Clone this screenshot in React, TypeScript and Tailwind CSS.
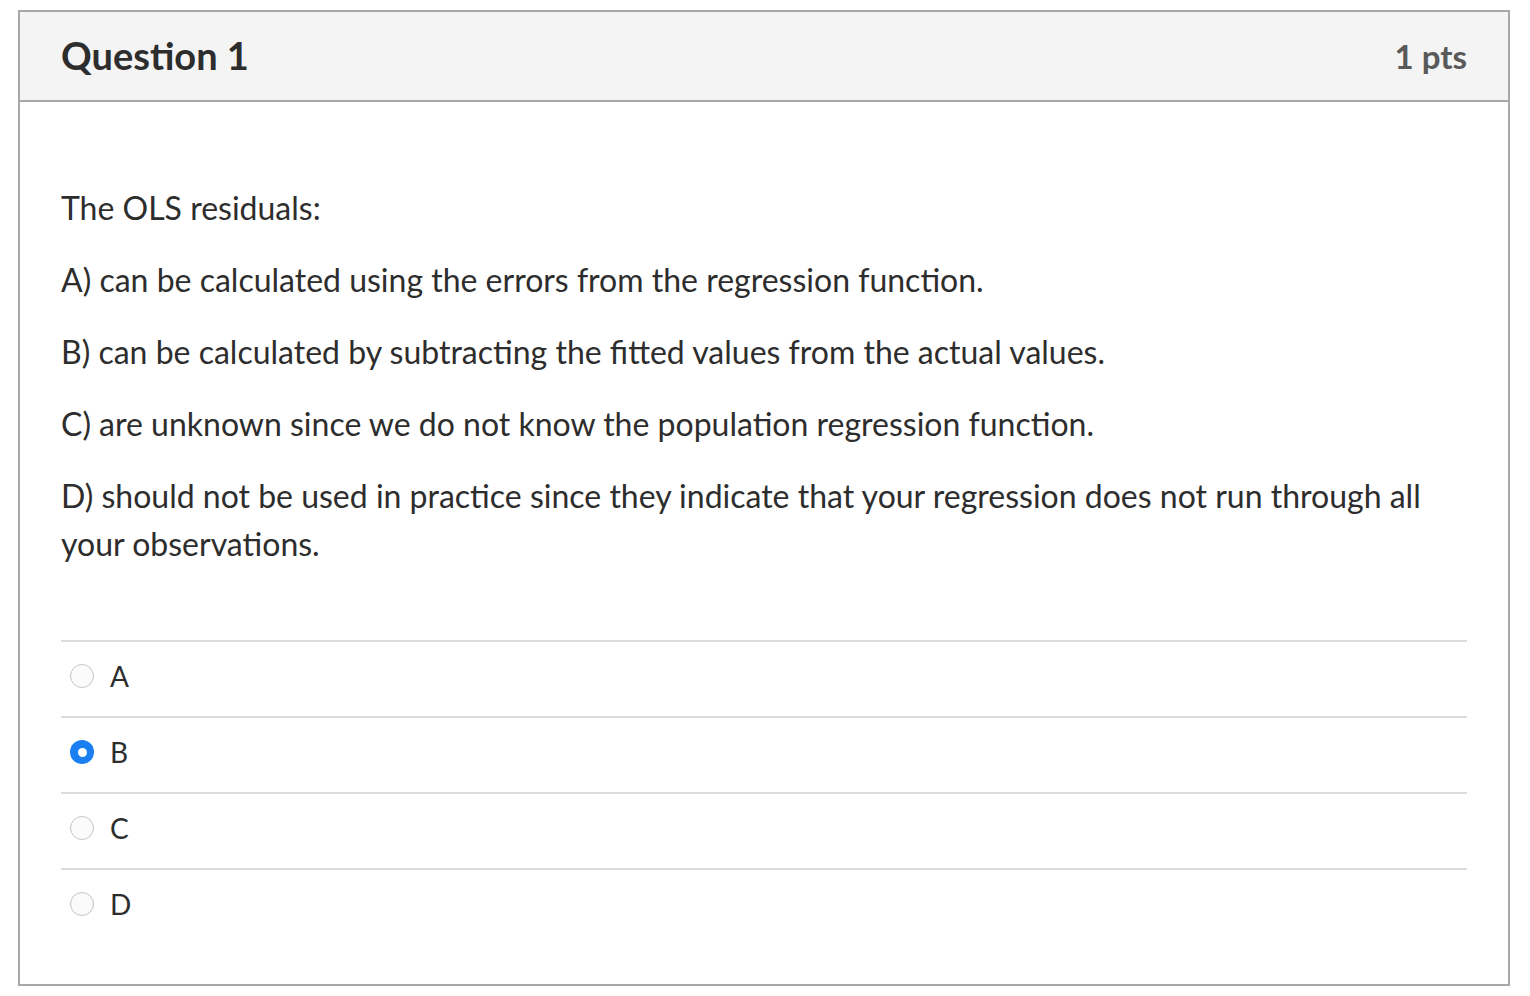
import React from "react";

const answers = ["A", "B", "C", "D"];

function Radio({ checked }: { checked: boolean }) {
  if (checked) {
    return (
      <span className="flex h-[24px] w-[24px] items-center justify-center rounded-full bg-[#1a7ff0]">
        <span className="h-[9px] w-[9px] rounded-full bg-white" />
      </span>
    );
  }
  return (
    <span className="block h-[24px] w-[24px] rounded-full border border-[#c4c4c4] bg-[#fbfbfb]" />
  );
}

export default function App() {
  return (
    <div
      className="min-h-[996px] bg-white pl-[18px] pt-[10px] text-[#2d2d2d]"
      style={{ fontFamily: "Lato, 'Open Sans', sans-serif" }}
    >
      <div className="h-[976px] w-[1492px] border-2 border-[#a8a8a8]">
        <div className="flex h-[90px] items-center justify-between border-b-2 border-[#a8a8a8] bg-[#f4f4f4] px-[41px] pb-[2px]">
          <h2 className="text-[38px] font-bold leading-none text-[#2d2d2d]">Question 1</h2>
          <span className="pt-[2px] text-[33px] font-bold leading-none text-[#595959]">1 pts</span>
        </div>
        <div className="px-[41px] pt-[82px]">
          <div className="flex flex-col gap-[24px] text-[32px] leading-[48px]">
            <p>The OLS residuals:</p>
            <p>A) can be calculated using the errors from the regression function.</p>
            <p>B) can be calculated by subtracting the fitted values from the actual values.</p>
            <p>C) are unknown since we do not know the population regression function.</p>
            <p>
              D) should not be used in practice since they indicate that your regression does not run through all
              your observations.
            </p>
          </div>
          <div className="mt-[72px]">
            {answers.map((a) => (
              <div
                key={a}
                className="flex h-[76px] items-center gap-[16px] border-t-2 border-[#dcdcdc] pl-[9px] pb-[6px]"
              >
                <Radio checked={a === "B"} />
                <span className="text-[28px] leading-none text-[#2d2d2d]">{a}</span>
              </div>
            ))}
          </div>
        </div>
      </div>
    </div>
  );
}
